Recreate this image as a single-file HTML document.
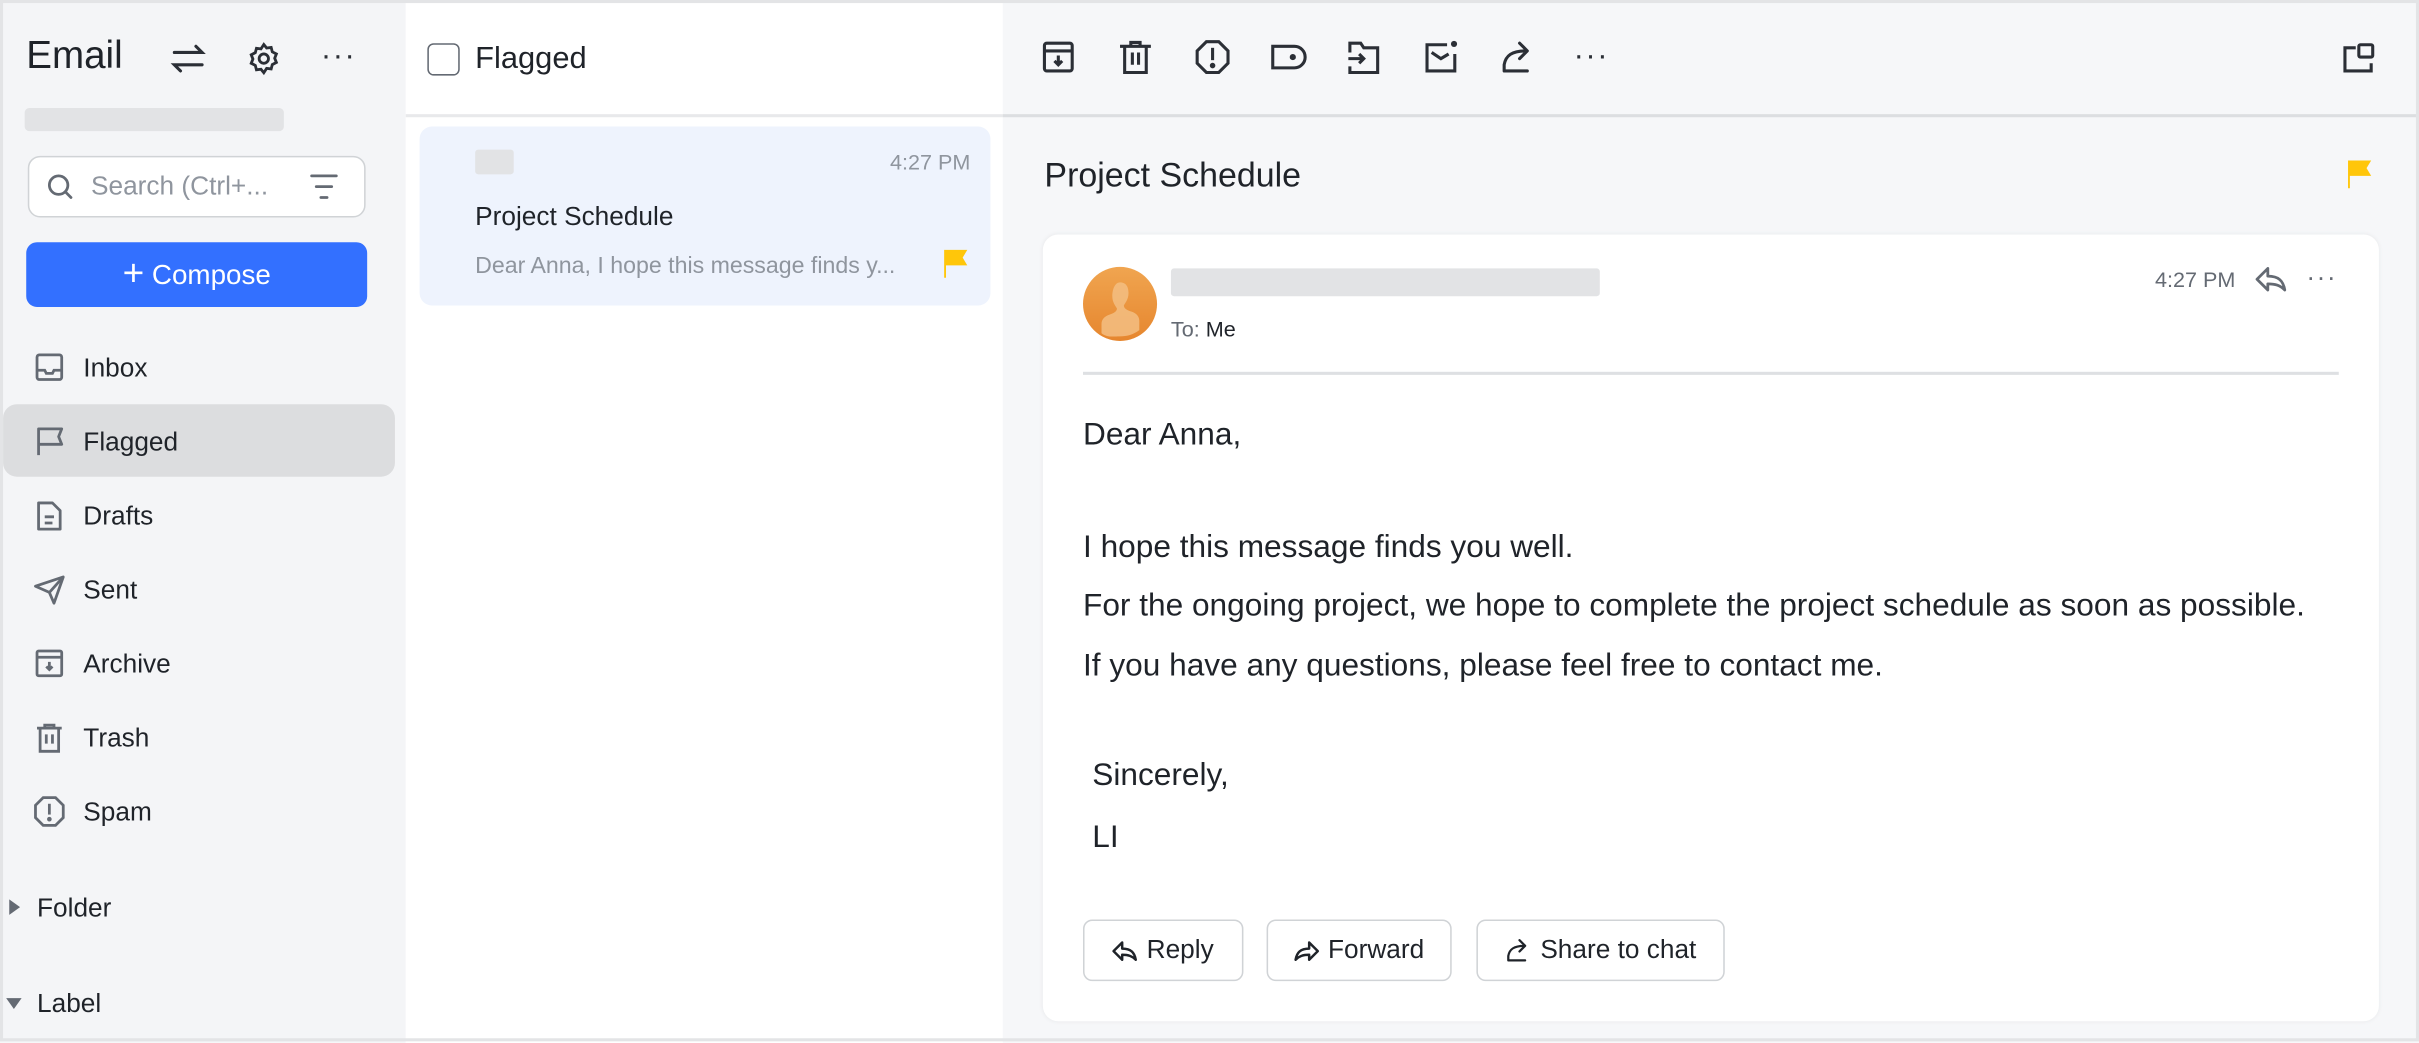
<!DOCTYPE html>
<html><head><meta charset="utf-8">
<style>
*{box-sizing:border-box;margin:0;padding:0}
html,body{width:2419px;height:1042px;overflow:hidden;background:#fff}
#w{position:absolute;left:0;top:0;width:1568px;height:676px;transform:scale(1.54273);transform-origin:0 0;font-family:"Liberation Sans","DejaVu Sans",sans-serif;color:#1f2329;overflow:hidden}
.brd{position:absolute;left:0;top:0;width:1568px;height:675px;border:2px solid #e3e4e6;pointer-events:none}
.a{position:absolute}
.side{left:0;top:0;width:263px;height:676px;background:#f4f5f7}
.mid{left:263px;top:0;width:387px;height:676px;background:#fff}
.right{left:650px;top:0;width:918px;height:676px;background:#f6f7f9}
.nav{position:absolute;left:54px;font-size:17px;color:#1f2329}
.ni{position:absolute;left:22px;width:20px;height:20px}
svg{overflow:visible}
.tb{position:absolute;top:26px;width:22px;height:22px}
.btn{position:absolute;top:596px;height:40px;border:1px solid #d0d3d6;border-radius:6px;background:#fff;font-size:17px;display:flex;align-items:center;justify-content:center;gap:6px}
.body{position:absolute;left:702px;font-size:20.5px;color:#1f2329;font-family:"Liberation Sans",Arial,sans-serif}
</style></head><body><div id="w">
<div class="a side"></div>
<div class="a mid"></div>
<div class="a right"></div>

<!-- sidebar -->
<div class="a" style="left:17px;top:22px;font-size:25px;color:#1f2329">Email</div>
<svg class="a" style="left:111px;top:27px" width="22" height="22" viewBox="0 0 22 22" fill="none" stroke="#2b2f36" stroke-width="2" stroke-linecap="round"><path d="M2 7h18l-4-4M20 15H2l4 4"/></svg>
<svg class="a" style="left:160px;top:27px" width="22" height="22" viewBox="0 0 24 24" fill="none" stroke="#2b2f36" stroke-width="2"><path d="M12 2l2 2.5 3.2-.4.8 3.1 2.9 1.5-1.2 3 1.2 3-2.9 1.5-.8 3.1-3.2-.4L12 22l-2-2.5-3.2.4-.8-3.1-2.9-1.5 1.2-3-1.2-3 2.9-1.5.8-3.1 3.2.4z"/><circle cx="12" cy="12" r="3.3"/></svg>
<div class="a" style="left:208px;top:25px;font-size:20px;letter-spacing:1px;color:#2b2f36">···</div>
<div class="a" style="left:16px;top:70px;width:168px;height:15px;background:#e2e3e5;border-radius:3px"></div>
<div class="a" style="left:18px;top:101px;width:219px;height:40px;background:#fff;border:1px solid #d0d3d6;border-radius:8px"></div>
<svg class="a" style="left:30px;top:112px" width="18" height="18" viewBox="0 0 18 18" fill="none" stroke="#646a73" stroke-width="1.8" stroke-linecap="round"><circle cx="8" cy="8" r="6"/><path d="M12.5 12.5l3.5 3.5"/></svg>
<div class="a" style="left:59px;top:111px;font-size:17px;color:#8f959e">Search (Ctrl+...</div>
<svg class="a" style="left:200px;top:112px" width="20" height="18" viewBox="0 0 20 18" fill="none" stroke="#646a73" stroke-width="1.8" stroke-linecap="round"><path d="M2 2h16M5 9h10M8 16h4"/></svg>
<div class="a" style="left:17px;top:157px;width:221px;height:42px;background:#3370ff;border-radius:7px;color:#fff;font-size:18px;display:flex;align-items:center;justify-content:center"><span style="font-size:24px;font-weight:300;margin-right:5px;line-height:1">+</span>Compose</div>

<div class="a" style="left:2px;top:262px;width:254px;height:47px;background:#dcdddf;border-radius:9px"></div>
<svg class="ni" style="top:228px" viewBox="0 0 20 20" fill="none" stroke="#646a73" stroke-width="1.8"><rect x="2" y="2" width="16" height="16" rx="1.5"/><path d="M2 12h5l1 2h4l1-2h5"/></svg>
<div class="nav" style="top:229px">Inbox</div>
<svg class="ni" style="top:276px" viewBox="0 0 20 20" fill="none" stroke="#646a73" stroke-width="1.8" stroke-linejoin="round"><path d="M3 19V2h15l-2 5 2 5H3"/></svg>
<div class="nav" style="top:277px">Flagged</div>
<svg class="ni" style="top:324px" viewBox="0 0 20 20" fill="none" stroke="#646a73" stroke-width="1.8" stroke-linejoin="round"><path d="M3 2h9l5 5v12H3z"/><path d="M7 11h6M7 15h5"/></svg>
<div class="nav" style="top:325px">Drafts</div>
<svg class="ni" style="top:372px" viewBox="0 0 20 20" fill="none" stroke="#646a73" stroke-width="1.8" stroke-linejoin="round"><path d="M1 8L19 2 13 19l-3-7z"/><path d="M10 12l9-10"/></svg>
<div class="nav" style="top:373px">Sent</div>
<svg class="ni" style="top:420px" viewBox="0 0 20 20" fill="none" stroke="#646a73" stroke-width="1.8"><rect x="2" y="2" width="16" height="16" rx="1"/><path d="M2 6h16M10 9v5M8 12l2 2 2-2"/></svg>
<div class="nav" style="top:421px">Archive</div>
<svg class="ni" style="top:468px" viewBox="0 0 20 20" fill="none" stroke="#646a73" stroke-width="1.8"><path d="M2 4h16M7 4V2h6v2M4 4v15h12V4M8 8v6M12 8v6"/></svg>
<div class="nav" style="top:469px">Trash</div>
<svg class="ni" style="top:516px" viewBox="0 0 20 20" fill="none" stroke="#646a73" stroke-width="1.8"><path d="M6 1h8l5 5v8l-5 5H6l-5-5V6z"/><path d="M10 5v7"/><circle cx="10" cy="15" r=".6" fill="#646a73"/></svg>
<div class="nav" style="top:517px">Spam</div>
<div class="a" style="left:6px;top:583px;width:0;height:0;border-left:7px solid #646a73;border-top:5px solid transparent;border-bottom:5px solid transparent"></div>
<div class="nav" style="left:24px;top:579px">Folder</div>
<div class="a" style="left:4px;top:647px;width:0;height:0;border-top:7px solid #646a73;border-left:5.5px solid transparent;border-right:5.5px solid transparent"></div>
<div class="nav" style="left:24px;top:641px">Label</div>

<!-- middle -->
<div class="a" style="left:277px;top:28px;width:21px;height:21px;border:1.5px solid #646a73;border-radius:4px;background:#fff"></div>
<div class="a" style="left:308px;top:27px;font-size:20px">Flagged</div>
<div class="a" style="left:263px;top:74px;width:387px;height:2px;background:#e8e9eb"></div>
<div class="a" style="left:272px;top:82px;width:370px;height:116px;background:#eef3fd;border-radius:8px"></div>
<div class="a" style="left:308px;top:97px;width:25px;height:16px;background:#e2e3e5;border-radius:2px"></div>
<div class="a" style="left:520px;top:97px;width:109px;text-align:right;font-size:14px;color:#8f959e">4:27 PM</div>
<div class="a" style="left:308px;top:131px;font-size:17px">Project Schedule</div>
<div class="a" style="left:308px;top:164px;font-size:15px;color:#8f959e">Dear Anna, I hope this message finds y...</div>
<svg class="a" style="left:611px;top:161px" width="17" height="20" viewBox="0 0 17 20"><path d="M1 1h15l-3 5 3 5H2.2v8H1z" fill="#ffc60a"/></svg>

<!-- right toolbar -->
<svg class="tb" style="left:675px" viewBox="0 0 22 22" fill="none" stroke="#2b2f36" stroke-width="2"><rect x="2" y="2" width="18" height="18" rx="1.5"/><path d="M2 7h18M11 10v6M8.5 13.5L11 16l2.5-2.5"/></svg>
<svg class="tb" style="left:725px" viewBox="0 0 22 22" fill="none" stroke="#2b2f36" stroke-width="2"><path d="M1 4h20M8 4V1.5h6V4M4 4v17h14V4M9 8v8M13 8v8"/></svg>
<svg class="tb" style="left:775px" viewBox="0 0 22 22" fill="none" stroke="#2b2f36" stroke-width="2"><path d="M7 1h8l6 6v8l-6 6H7l-6-6V7z"/><path d="M11 5v8"/><circle cx="11" cy="16.5" r=".8" fill="#2b2f36"/></svg>
<svg class="tb" style="left:824px" viewBox="0 0 22 22" fill="none" stroke="#2b2f36" stroke-width="2"><path d="M1 4h14a6 6 0 010 14H1z"/><circle cx="14" cy="11" r="1" fill="#2b2f36"/></svg>
<svg class="tb" style="left:873px" viewBox="0 0 22 22" fill="none" stroke="#2b2f36" stroke-width="2"><path d="M2 8V2h7l2 3h9v16H2v-4"/><path d="M1 12h10M8 9l3 3-3 3"/></svg>
<svg class="tb" style="left:923px" viewBox="0 0 22 22" fill="none" stroke="#2b2f36" stroke-width="2"><path d="M15 3H2v17h18V9"/><path d="M5 8l6 4 5-3"/><circle cx="19.5" cy="2.5" r="2" fill="#2b2f36" stroke="none"/></svg>
<svg class="tb" style="left:972px" viewBox="0 0 22 22" fill="none" stroke="#2b2f36" stroke-width="2" stroke-linecap="round" stroke-linejoin="round"><path d="M3 16c1-6 5-9 14-9M13 2l5 5-5 5M3 16v4h15"/></svg>
<div class="a" style="left:1020px;top:25px;font-size:20px;letter-spacing:1px;color:#2b2f36">···</div>
<svg class="a" style="left:1518px;top:27px" width="22" height="22" viewBox="0 0 22 22" fill="none" stroke="#2b2f36" stroke-width="2"><path d="M9 4H2v15h17v-5"/><rect x="11" y="2" width="9" height="8" rx="1"/></svg>
<div class="a" style="left:650px;top:74px;width:918px;height:2px;background:#dcdee1"></div>

<div class="a" style="left:677px;top:101px;font-size:22px">Project Schedule</div>
<svg class="a" style="left:1521px;top:103px" width="17" height="20" viewBox="0 0 17 20"><path d="M1 1h15l-3 5 3 5H2.2v8H1z" fill="#ffc60a"/></svg>

<!-- card -->
<div class="a" style="left:676px;top:152px;width:866px;height:510px;background:#fff;border-radius:10px;box-shadow:0 0 3px rgba(0,0,0,.06)"></div>
<svg class="a" style="left:702px;top:173px" width="48" height="48" viewBox="0 0 48 48"><defs><linearGradient id="g" x1="0" y1="0" x2="0" y2="1"><stop offset="0" stop-color="#f0a550"/><stop offset="1" stop-color="#e6862e"/></linearGradient></defs><circle cx="24" cy="24" r="24" fill="url(#g)"/><path d="M24 10c4 0 5.5 3 5.5 7 0 4-2 6-3 8 0 2 2 3 5 4 3 1 5 3 5 6v6c-4 3-8 4-12.5 4S16 46 12 43v-6c0-3 2-5 5-6 3-1 5-2 5-4-1-2-3-4-3-8 0-4 1.5-9 5-9z" fill="#f3be82" opacity=".85"/></svg>
<div class="a" style="left:759px;top:174px;width:278px;height:18px;background:#e2e3e5;border-radius:2px"></div>
<div class="a" style="left:759px;top:205px;font-size:14px;color:#646a73">To: <span style="color:#1f2329">Me</span></div>
<div class="a" style="left:1360px;top:173px;width:89px;text-align:right;font-size:14px;color:#646a73">4:27 PM</div>
<svg class="a" style="left:1462px;top:172px" width="20" height="18" viewBox="0 0 20 18" fill="none" stroke="#646a73" stroke-width="1.8" stroke-linejoin="round"><path d="M8 2L1 9l7 7v-4c5 0 8 1 11 4-1-6-4-9-11-9z"/></svg>
<div class="a" style="left:1495px;top:170px;font-size:17px;letter-spacing:1px;color:#646a73">···</div>
<div class="a" style="left:702px;top:241px;width:814px;height:1.5px;background:#dee0e3"></div>

<div class="body" style="top:270px">Dear Anna,</div>
<div class="body" style="top:343px">I hope this message finds you well.</div>
<div class="body" style="top:381px">For the ongoing project, we hope to complete the project schedule as soon as possible.</div>
<div class="body" style="top:420px">If you have any questions, please feel free to contact me.</div>
<div class="body" style="left:708px;top:491px">Sincerely,</div>
<div class="body" style="left:708px;top:531px">LI</div>

<div class="btn" style="left:702px;width:104px"><svg width="16" height="15" viewBox="0 0 20 18" fill="none" stroke="#1f2329" stroke-width="2" stroke-linejoin="round"><path d="M8 2L1 9l7 7v-4c5 0 8 1 11 4-1-6-4-9-11-9z"/></svg>Reply</div>
<div class="btn" style="left:821px;width:120px"><svg width="16" height="15" viewBox="0 0 20 18" fill="none" stroke="#1f2329" stroke-width="2" stroke-linejoin="round"><path d="M12 2l7 7-7 7v-4c-5 0-8 1-11 4 1-6 4-9 11-9z"/></svg>Forward</div>
<div class="btn" style="left:957px;width:161px"><svg width="17" height="16" viewBox="0 0 22 22" fill="none" stroke="#1f2329" stroke-width="2" stroke-linecap="round" stroke-linejoin="round"><path d="M3 16c1-6 5-9 14-9M13 2l5 5-5 5M3 16v4h15"/></svg>Share to chat</div>
<div class="brd"></div>
</div></body></html>
